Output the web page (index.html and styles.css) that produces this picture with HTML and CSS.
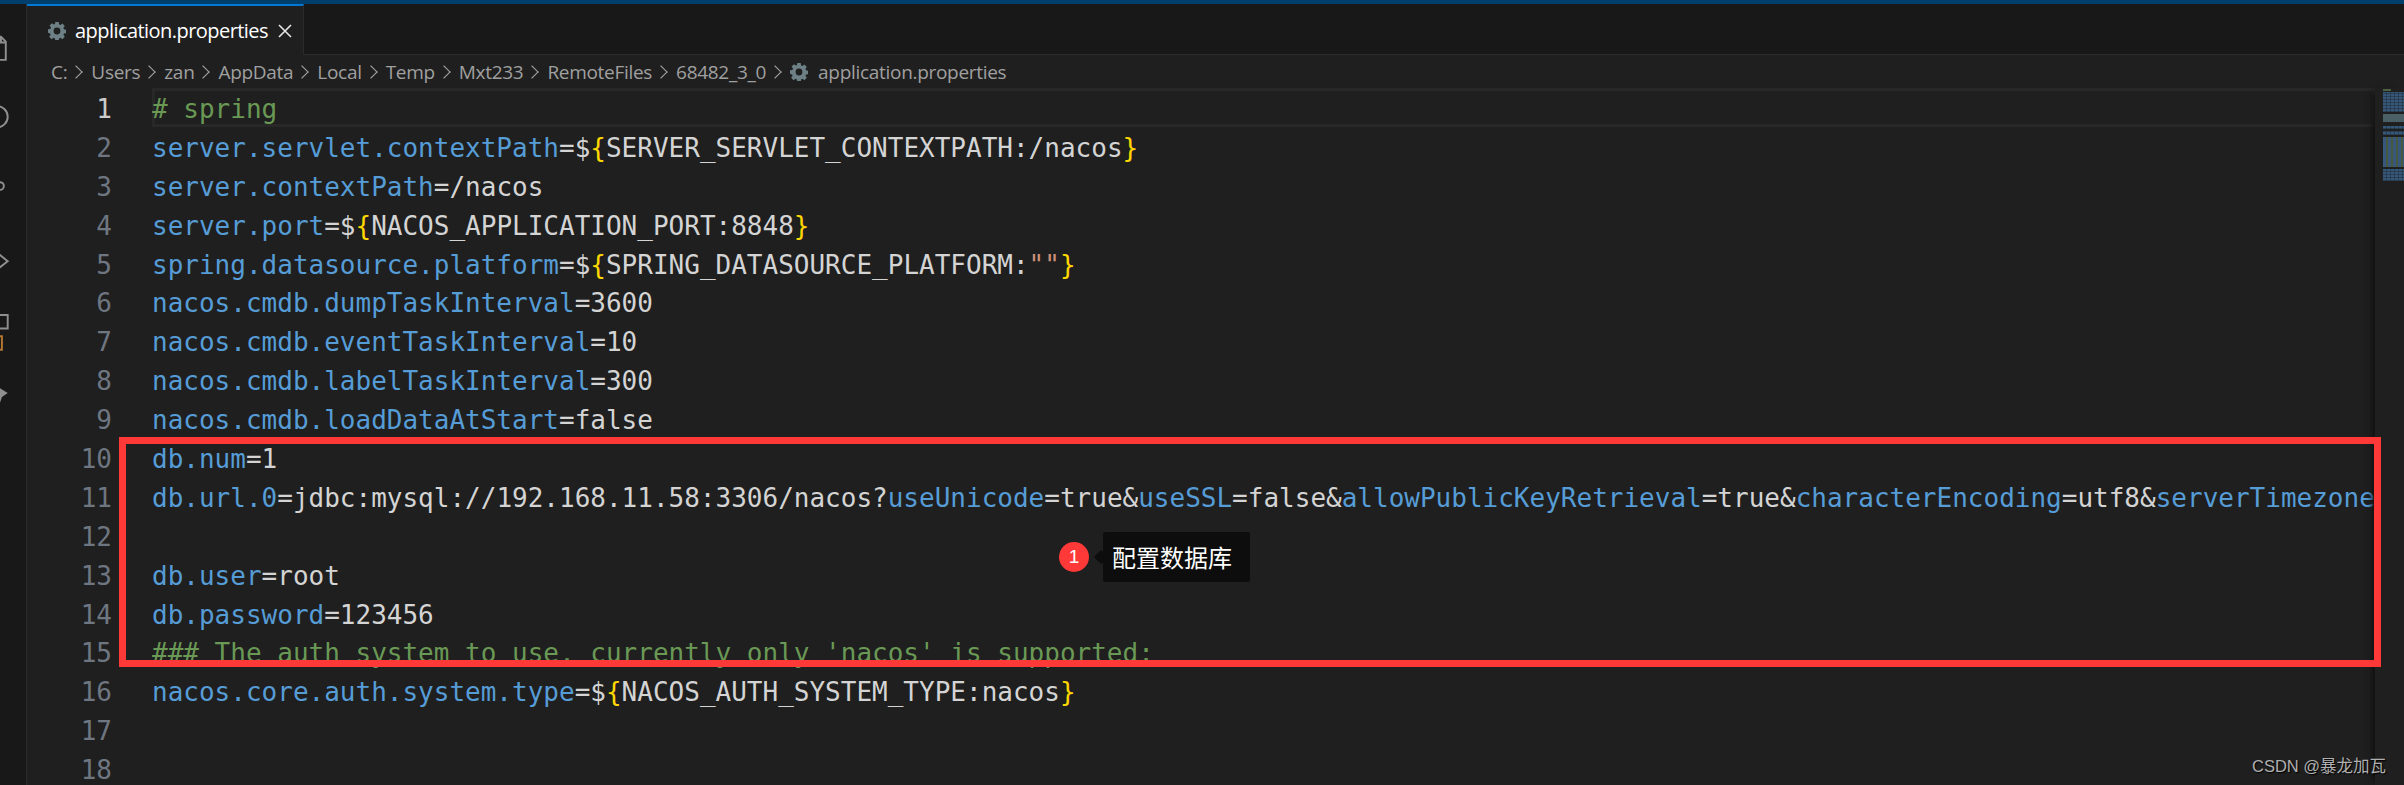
FILE: index.html
```html
<html>
  <head>
    <meta charset="utf-8">
    <title>application.properties</title>
    <link rel="stylesheet" href="styles.css">
  </head>
  <body>
    <div class="titlebar"></div>
    <div class="workbench">
      <svg class="activity" width="27" height="781" viewBox="0 0 27 781" fill="none" stroke="#8f8f8f" stroke-width="2">
        <path d="M-4 19h5l5 5v19h-10"/>
        <path d="M1 19v6h5"/>
        <circle cx="-3" cy="102" r="11"/>
        <circle cx="0" cy="174" r="4"/>
        <path d="M-2 244l10 8-10 8"/>
        <path d="M-4 308h12v14h-12"/>
        <path d="M-4 330h6v14h-6" stroke="#b5772f"/>
        <path d="M0 384l8 5-6 4-3 9-2-6-6-3z" fill="#8f8f8f" stroke="none"/>
      </svg>
      <div class="main">
        <div class="tabs">
          <div class="tab">
            <svg class="gear" width="18" height="18" viewBox="0 0 18 18"><use href="#gear-shape"/></svg>
            <span class="tab-name">application.properties</span>
            <svg class="close" width="14" height="14" viewBox="0 0 14 14"><path d="M1 1l12 12M13 1L1 13" stroke="#e6e6e6" stroke-width="1.6"/></svg>
          </div>
        </div>
        <div class="crumbs">
          <span>C:</span><i class="chev"></i>
          <span>Users</span><i class="chev"></i>
          <span>zan</span><i class="chev"></i>
          <span>AppData</span><i class="chev"></i>
          <span>Local</span><i class="chev"></i>
          <span>Temp</span><i class="chev"></i>
          <span>Mxt233</span><i class="chev"></i>
          <span>RemoteFiles</span><i class="chev"></i>
          <span>68482_3_0</span><i class="chev"></i>
          <svg class="gear" width="18" height="18" viewBox="0 0 18 18">
            <defs>
              <g id="gear-shape">
                <path fill="#6d8086" fill-rule="evenodd" d="M7.3 0h3.4l.4 2.4 1.3.6 2-1.4 2.4 2.4-1.4 2 .6 1.3 2.4.4v3.4l-2.4.4-.6 1.3 1.4 2-2.4 2.4-2-1.4-1.3.6-.4 2.4H7.3l-.4-2.4-1.3-.6-2 1.4-2.4-2.4 1.4-2-.6-1.3L0 10.7V7.3l2.4-.4.6-1.3-1.4-2L4 1.2l2 1.4 1-.6zM9 5.6a3.4 3.4 0 1 0 0 6.8 3.4 3.4 0 0 0 0-6.8z"/>
              </g>
            </defs>
            <use href="#gear-shape"/>
          </svg>
          <span class="crumb-file">application.properties</span>
        </div>
        <div class="body">
          <div class="editor">
            <div class="line"><span class="num on">1</span><span class="code current"><span class="c"># spring</span></span></div>
            <div class="line"><span class="num">2</span><span class="code"><span class="k">server.servlet.contextPath</span>=$<span class="b">{</span>SERVER_SERVLET_CONTEXTPATH:/nacos<span class="b">}</span></span></div>
            <div class="line"><span class="num">3</span><span class="code"><span class="k">server.contextPath</span>=/nacos</span></div>
            <div class="line"><span class="num">4</span><span class="code"><span class="k">server.port</span>=$<span class="b">{</span>NACOS_APPLICATION_PORT:8848<span class="b">}</span></span></div>
            <div class="line"><span class="num">5</span><span class="code"><span class="k">spring.datasource.platform</span>=$<span class="b">{</span>SPRING_DATASOURCE_PLATFORM:<span class="s">""</span><span class="b">}</span></span></div>
            <div class="line"><span class="num">6</span><span class="code"><span class="k">nacos.cmdb.dumpTaskInterval</span>=3600</span></div>
            <div class="line"><span class="num">7</span><span class="code"><span class="k">nacos.cmdb.eventTaskInterval</span>=10</span></div>
            <div class="line"><span class="num">8</span><span class="code"><span class="k">nacos.cmdb.labelTaskInterval</span>=300</span></div>
            <div class="line"><span class="num">9</span><span class="code"><span class="k">nacos.cmdb.loadDataAtStart</span>=false</span></div>
            <div class="line"><span class="num">10</span><span class="code"><span class="k">db.num</span>=1</span></div>
            <div class="line"><span class="num">11</span><span class="code"><span class="k">db.url.0</span>=jdbc:mysql://192.168.11.58:3306/nacos?<span class="k">useUnicode</span>=true&amp;<span class="k">useSSL</span>=false&amp;<span class="k">allowPublicKeyRetrieval</span>=true&amp;<span class="k">characterEncoding</span>=utf8&amp;<span class="k">serverTimezone</span></span></div>
            <div class="line"><span class="num">12</span><span class="code"></span></div>
            <div class="line"><span class="num">13</span><span class="code"><span class="k">db.user</span>=root</span></div>
            <div class="line"><span class="num">14</span><span class="code"><span class="k">db.password</span>=123456</span></div>
            <div class="line"><span class="num">15</span><span class="code"><span class="c">### The auth system to use, currently only 'nacos' is supported:</span></span></div>
            <div class="line"><span class="num">16</span><span class="code"><span class="k">nacos.core.auth.system.type</span>=$<span class="b">{</span>NACOS_AUTH_SYSTEM_TYPE:nacos<span class="b">}</span></span></div>
            <div class="line"><span class="num">17</span><span class="code"></span></div>
            <div class="line"><span class="num">18</span><span class="code"></span></div>
          </div>
          <div class="minimap">
            <div class="mini mini-top"></div>
            <div class="mini mini-a"></div>
            <div class="mini mini-b"></div>
            <div class="mini mini-c"></div>
            <div class="mini mini-d"></div>
            <div class="mini mini-e"></div>
            <div class="mini mini-f"></div>
          </div>
        </div>
      </div>
    </div>

    <div class="redbox"></div>
    <div class="marker">
      <span class="dot">1</span>
      <span class="tip">配置数据库</span>
    </div>
    <div class="watermark">CSDN @暴龙加瓦</div>
  </body>
</html>
```

FILE: styles.css
```css
html, body {
  margin: 0;
  height: 785px;
  overflow: hidden;
  background-color: #1f1f1f;
}

.titlebar {
  height: 4px;
  background-color: #003f6b;
}

.workbench {
  display: flex;
  height: 781px;
}

.activity {
  flex: none;
  background-color: #181818;
  border-right: 1px solid #2b2b2b;
  box-sizing: border-box;
}

.main {
  flex: 1;
  min-width: 0;
  display: flex;
  flex-direction: column;
}

.tabs {
  height: 51px;
  flex: none;
  box-sizing: border-box;
  background-color: #181818;
  border-bottom: 1px solid #2b2b2b;
  display: flex;
}

.tab {
  width: 277px;
  height: 51px;
  box-sizing: border-box;
  background-color: #1f1f1f;
  border-top: 2px solid #0078d4;
  border-right: 1px solid #2b2b2b;
  display: flex;
  align-items: center;
  padding-left: 21px;
  font: 20px "Open Sans", sans-serif;
  color: #ffffff;
}

.tab-name {
  margin-left: 9px;
  letter-spacing: -0.55px;
}

.close {
  margin-left: 10px;
}

.crumbs {
  height: 33px;
  flex: none;
  display: flex;
  align-items: center;
  padding-left: 24px;
  font: 19px "Open Sans", sans-serif;
  letter-spacing: -0.3px;
  color: #a0a0a0;
  white-space: nowrap;
}

.chev {
  width: 7px;
  height: 7px;
  margin: 0 11px 0 5px;
  border-top: 1.5px solid #a0a0a0;
  border-right: 1.5px solid #a0a0a0;
  transform: rotate(45deg) scale(1.2);
  flex: none;
}

.crumb-file {
  margin-left: 10px;
}

.body {
  flex: 1;
  display: flex;
  min-height: 0;
}

.editor {
  flex: 1;
  min-width: 0;
  overflow: hidden;
  font: 26px "DejaVu Sans Mono", monospace;
  color: #d4d4d4;
}

.line {
  display: flex;
  height: 38.9px;
  line-height: 43px;
}

.num {
  flex: none;
  width: 85px;
  margin-right: 40px;
  text-align: right;
  color: #6e7681;
}

.num.on {
  color: #cccccc;
}

.code {
  flex: 1;
  min-width: 0;
  overflow: hidden;
  white-space: pre;
}

.current {
  box-shadow: inset 0 0 0 3px #282828;
}

.k { color: #569cd6; }
.c { color: #6a9955; }
.b { color: #ffd700; }
.s { color: #ce9178; }

.minimap {
  flex: none;
  width: 29px;
  box-sizing: border-box;
  padding: 1px 0 0 8px;
  background-color: #1f1f1f;
  box-shadow: -6px 0 6px -3px #111111;
}

.mini {
  background:
    repeating-linear-gradient(0deg, #1f1f1f66 0 1px, transparent 1px 3px),
    repeating-linear-gradient(90deg, #35587a 0 3px, #2b4258 3px 4px);
}

.mini-top { height: 2px; width: 8px; background: #4c6144; }
.mini-a { height: 20px; margin-top: 1px; }
.mini-b { height: 8px; margin-top: 2px; background: #4a5f66; }
.mini-c { height: 3px; margin-top: 4px; }
.mini-d { height: 4px; margin-top: 2px; }
.mini-e { height: 30px; margin-top: 2px; background: repeating-linear-gradient(90deg, #37587a 0 3px, #44593f 3px 5px); }
.mini-f { height: 12px; margin-top: 2px; }

.redbox {
  position: absolute;
  left: 119px;
  top: 437px;
  width: 2248px;
  height: 216px;
  border: 7px solid #ff3838;
}

.marker {
  position: absolute;
  left: 1059px;
  top: 532px;
  display: flex;
  align-items: center;
}

.dot {
  width: 30px;
  height: 30px;
  border-radius: 50%;
  background-color: #ff3838;
  color: #ffffff;
  text-align: center;
  font: 19px/30px "Liberation Sans", sans-serif;
}

.tip {
  position: relative;
  margin-left: 14px;
  width: 147px;
  height: 50px;
  box-sizing: border-box;
  padding-left: 9px;
  border-radius: 2px;
  background-color: #0d0d0d;
  color: #ffffff;
  font: 24px/50px "Noto Sans CJK SC", sans-serif;
}

.tip::before {
  content: "";
  position: absolute;
  left: -7px;
  top: 20px;
  width: 10px;
  height: 10px;
  background-color: #0d0d0d;
  transform: rotate(45deg);
}

.watermark {
  position: absolute;
  left: 2252px;
  top: 754px;
  font: 16.5px/24px "Liberation Sans", "Noto Sans CJK SC", sans-serif;
  color: #b0b0b0;
  text-shadow: 1px 1px 1px #000000;
  white-space: nowrap;
}
```
